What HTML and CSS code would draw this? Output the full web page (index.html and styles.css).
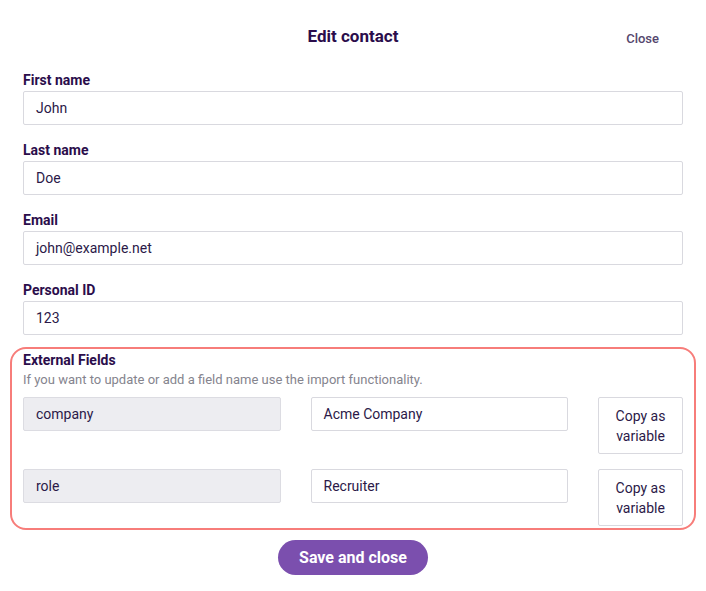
FILE: index.html
```html
<!DOCTYPE html>
<html>
<head>
<meta charset="utf-8">
<link rel="stylesheet" href="styles.css">
</head>
<body>
<div class="page">
  <header class="header">
    <span></span>
    <h1 class="title">Edit contact</h1>
    <a class="close">Close</a>
  </header>
  <div class="field">
    <label class="label">First name</label>
    <div class="input">John</div>
  </div>
  <div class="field">
    <label class="label">Last name</label>
    <div class="input">Doe</div>
  </div>
  <div class="field">
    <label class="label">Email</label>
    <div class="input">john@example.net</div>
  </div>
  <div class="field">
    <label class="label">Personal ID</label>
    <div class="input">123</div>
  </div>
  <section class="external">
    <div class="label">External Fields</div>
    <p class="desc">If you want to update or add a field name use the import functionality.</p>
    <div class="rows">
      <div class="input gray">company</div>
      <div class="input">Acme Company</div>
      <button class="copy">Copy as<br>variable</button>
      <div class="input gray">role</div>
      <div class="input">Recruiter</div>
      <button class="copy">Copy as<br>variable</button>
    </div>
  </section>
  <div class="footer">
    <button class="save">Save and close</button>
  </div>
</div>
</body>
</html>
```
FILE: styles.css
```css
* { box-sizing: border-box; }
body {
  margin: 0;
  font-family: Roboto, "Liberation Sans", sans-serif;
  color: #2b0d4b;
  background: #fff;
}
.page {
  padding: 25px 23px 0 23px;
}
.header {
  display: grid;
  grid-template-columns: 1fr auto 1fr;
  align-items: center;
  height: 20px;
  margin-bottom: 27px;
}
.title {
  margin: 0;
  font-size: 17px;
  line-height: 20px;
  font-weight: 700;
  color: #2b0d4b;
}
.close {
  justify-self: end;
  margin-right: 24px;
  margin-top: 6px;
  font-size: 13px;
  font-weight: 500;
  color: #55466d;
}
.field {
  margin-bottom: 17px;
}
.label {
  display: block;
  font-size: 14px;
  line-height: 16px;
  font-weight: 700;
  margin-bottom: 3px;
  color: #2b0d4b;
}
.input {
  height: 34px;
  border: 1px solid #d9d9df;
  border-radius: 2px;
  padding: 0 12px;
  font-size: 14px;
  line-height: 32px;
  color: #2b1948;
  background: #fff;
}
.input.gray {
  background: #ededf1;
  border-color: #dcdce2;
}
.external {
  margin: -5px -13px 0 -13px;
  border: 2px solid #f77d7a;
  border-radius: 16px;
  padding: 3px 11px 2px 11px;
}
.external .label {
  margin-bottom: 4px;
}
.desc {
  margin: 0 0 9px 0;
  font-size: 13px;
  line-height: 16px;
  color: #85848e;
}
.rows {
  display: grid;
  grid-template-columns: 1fr 1fr 85px;
  column-gap: 30px;
  row-gap: 15px;
  align-items: start;
}
.copy {
  height: 57px;
  width: 85px;
  padding: 0;
  border: 1px solid #d9d9df;
  border-radius: 2px;
  background: #fff;
  font-family: Roboto, "Liberation Sans", sans-serif;
  font-size: 14px;
  line-height: 20px;
  color: #2b1948;
}
.footer {
  display: flex;
  justify-content: center;
  margin-top: 10px;
}
.save {
  width: 150px;
  height: 35px;
  border: none;
  border-radius: 18px;
  background: #7b4fae;
  color: #fff;
  font-family: Roboto, "Liberation Sans", sans-serif;
  font-size: 16px;
  font-weight: 700;
}
```
